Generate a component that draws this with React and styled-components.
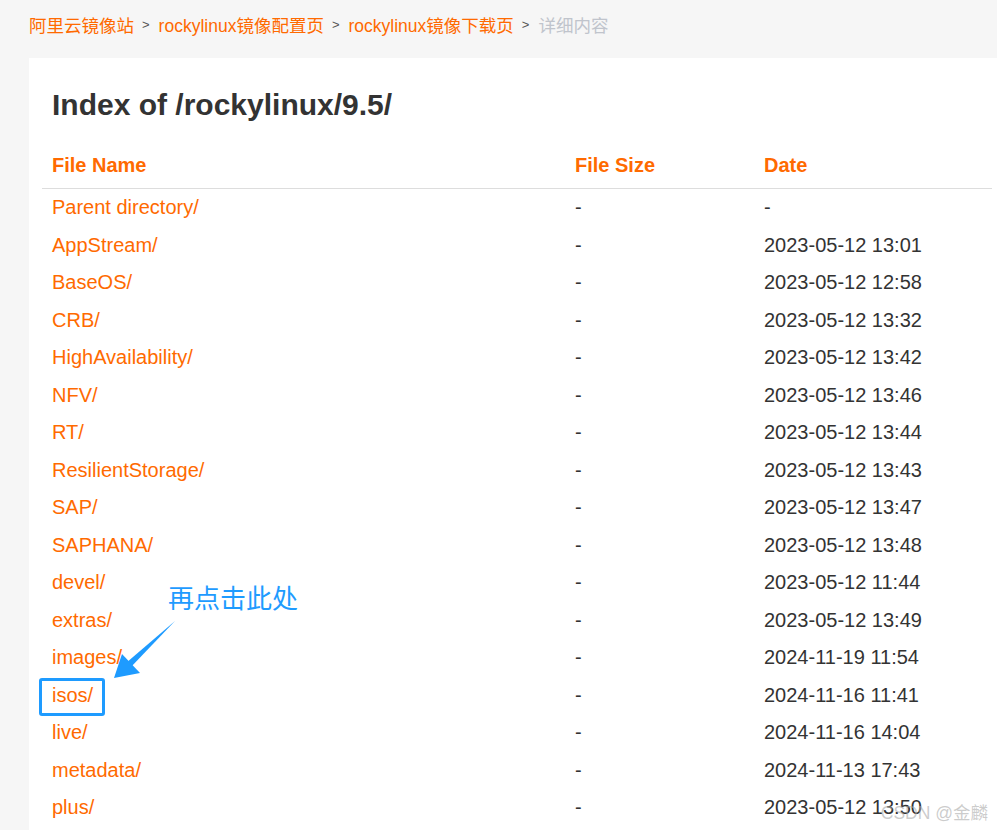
import React from "react";
import styled, { createGlobalStyle } from "styled-components";

const files = [
  { name: "Parent directory/", size: "-", date: "-" },
  { name: "AppStream/", size: "-", date: "2023-05-12 13:01" },
  { name: "BaseOS/", size: "-", date: "2023-05-12 12:58" },
  { name: "CRB/", size: "-", date: "2023-05-12 13:32" },
  { name: "HighAvailability/", size: "-", date: "2023-05-12 13:42" },
  { name: "NFV/", size: "-", date: "2023-05-12 13:46" },
  { name: "RT/", size: "-", date: "2023-05-12 13:44" },
  { name: "ResilientStorage/", size: "-", date: "2023-05-12 13:43" },
  { name: "SAP/", size: "-", date: "2023-05-12 13:47" },
  { name: "SAPHANA/", size: "-", date: "2023-05-12 13:48" },
  { name: "devel/", size: "-", date: "2023-05-12 11:44" },
  { name: "extras/", size: "-", date: "2023-05-12 13:49" },
  { name: "images/", size: "-", date: "2024-11-19 11:54" },
  { name: "isos/", size: "-", date: "2024-11-16 11:41", marked: true },
  { name: "live/", size: "-", date: "2024-11-16 14:04" },
  { name: "metadata/", size: "-", date: "2024-11-13 17:43" },
  { name: "plus/", size: "-", date: "2023-05-12 13:50" },
];

const crumbs = ["阿里云镜像站", "rockylinux镜像配置页", "rockylinux镜像下载页"];

const App = () => {
  return (
    <>
      <GlobalStyle />
      <Page>
        <Breadcrumb>
          {crumbs.map((c) => (
            <React.Fragment key={c}>
              <Crumb>{c}</Crumb>
              <Sep>&gt;</Sep>
            </React.Fragment>
          ))}
          <Current>详细内容</Current>
        </Breadcrumb>

        <Card>
          <Title>Index of /rockylinux/9.5/</Title>
          <Table>
            <colgroup>
              <col style={{ width: 523 }} />
              <col style={{ width: 189 }} />
              <col />
            </colgroup>
            <thead>
              <tr>
                <Th>File Name</Th>
                <Th>File Size</Th>
                <Th>Date</Th>
              </tr>
            </thead>
            <tbody>
              {files.map((f) => (
                <tr key={f.name}>
                  <Td>
                    <FileLink href="#" $marked={f.marked}>
                      {f.name}
                    </FileLink>
                  </Td>
                  <Td>{f.size}</Td>
                  <Td>{f.date}</Td>
                </tr>
              ))}
            </tbody>
          </Table>
        </Card>

        <Note>再点击此处</Note>
        <Arrow width="80" height="70" viewBox="0 0 80 70">
          <path d="M71 5 L22 47 L26 52 Z" fill="#1e9bff" />
          <path d="M10 62 L18 38 L36 57 Z" fill="#1e9bff" />
        </Arrow>
        <Watermark>CSDN @金麟</Watermark>
      </Page>
    </>
  );
};

export default App;

const GlobalStyle = createGlobalStyle`
  body {
    margin: 0;
    background: #f6f6f6;
    font-family: "Liberation Sans", Arial, "Noto Sans CJK SC", sans-serif;
    overflow: hidden;
  }
`;

const Page = styled.div`
  position: relative;
  width: 997px;
  height: 830px;
  overflow: hidden;
  padding-top: 12px;
  box-sizing: border-box;
`;

const Breadcrumb = styled.div`
  display: flex;
  align-items: center;
  height: 24px;
  padding-left: 29px;
  font-size: 17.5px;
`;

const Crumb = styled.a`
  color: #ff6a00;
  text-decoration: none;
`;

const Sep = styled.span`
  color: #555;
  font-size: 13px;
  margin: 0 9px 0 8px;
`;

const Current = styled.span`
  color: #c0c4cc;
`;

const Card = styled.div`
  background: #fff;
  margin: 22px -8px 0 29px;
  padding: 31px 13px 0;
  height: 800px;
`;

const Title = styled.h1`
  margin: 0 0 22px 10px;
  font-size: 30px;
  line-height: 32px;
  font-weight: bold;
  color: #333;
`;

const Table = styled.table`
  width: 100%;
  border-collapse: collapse;
  table-layout: fixed;
`;

const Th = styled.th`
  text-align: left;
  padding: 0 10px;
  height: 45px;
  font-size: 20px;
  font-weight: bold;
  color: #ff6a00;
  border-bottom: 1px solid #ddd;
`;

const Td = styled.td`
  padding: 0 10px;
  height: 37.5px;
  font-size: 20px;
  color: #333;
`;

const FileLink = styled.a`
  position: relative;
  color: #ff6a00;
  text-decoration: none;

  ${({ $marked }) =>
    $marked &&
    `
    &::after {
      content: "";
      position: absolute;
      left: -13px;
      right: -12px;
      top: -6px;
      bottom: -10px;
      border: 3px solid #1e9bff;
      border-radius: 3px;
    }
  `}
`;

const Note = styled.div`
  position: absolute;
  left: 168px;
  top: 580px;
  font-size: 26px;
  line-height: 34px;
  color: #1e9bff;
  font-family: "Noto Sans CJK SC", sans-serif;
`;

const Arrow = styled.svg`
  position: absolute;
  left: 104px;
  top: 616px;
`;

const Watermark = styled.div`
  position: absolute;
  right: 9px;
  bottom: 6px;
  font-size: 17.5px;
  color: rgba(170, 170, 170, 0.6);
`;
